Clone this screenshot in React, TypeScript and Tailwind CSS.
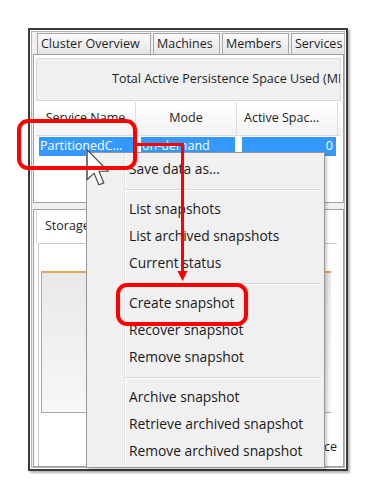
import React from 'react'

// Annotated screenshot: persistence console with a context menu on a service row

const FONT = { fontFamily: '"Open Sans", "Noto Sans", sans-serif' }

type MenuEntry = { label: string } | { sep: true }

const MENU: MenuEntry[] = [
    { label: 'Save data as...' },
    { sep: true },
    { label: 'List snapshots' },
    { label: 'List archived snapshots' },
    { label: 'Current status' },
    { sep: true },
    { label: 'Create snapshot' },
    { label: 'Recover snapshot' },
    { label: 'Remove snapshot' },
    { sep: true },
    { label: 'Archive snapshot' },
    { label: 'Retrieve archived snapshot' },
    { label: 'Remove archived snapshot' },
]

const Tab = ({ label, w }: { label: string; w: string }) => (
    <div
        className={`${w} h-[21px] shrink-0 flex items-center px-[3px] border border-[#a6a6a6] border-b-0 bg-gradient-to-b from-[#fbfbfb] to-[#e4e4e4] text-[12.5px] text-[#1e1e1e] whitespace-nowrap overflow-hidden`}
    >
        {label}
    </div>
)

const ContextMenu = () => (
    <div className="absolute left-[86px] top-[152px] w-[239px] h-[316px] border border-[#979797] bg-[#f0f0f0] shadow-[2px_2px_3px_rgba(0,0,0,0.2)] flex">
        <div className="w-[37px] shrink-0" />
        <div className="flex-1 border-l border-[#e2e3e3] shadow-[inset_1px_0_0_#ffffff] pt-[3px]">
            {MENU.map((item, i) =>
                'sep' in item ? (
                    <div key={i} className="h-[13px] flex items-center pr-[4px]">
                        <div className="w-full h-px bg-[#d7d7d7] shadow-[0_1px_0_#ffffff]" />
                    </div>
                ) : (
                    <div key={i} className="h-[27px] flex items-center pl-[4px] text-[13.8px] text-[#1a1a1a] whitespace-nowrap">
                        {item.label}
                    </div>
                ),
            )}
        </div>
    </div>
)

const Cursor = () => (
    <svg className="absolute left-[86px] top-[149px]" width="24" height="38" viewBox="0 0 13 21">
        <path
            d="M0.5 0.5 L0.5 17 L4.3 13.3 L7 19.8 L9.7 18.7 L7 12.3 L12.2 12.3 Z"
            fill="#ffffff"
            stroke="#4a4a4a"
            strokeWidth="0.65"
            strokeLinejoin="round"
        />
    </svg>
)

const Annotations = () => (
    <svg className="absolute left-0 top-0 pointer-events-none" width="370" height="488" viewBox="0 0 370 488">
        <rect x="19" y="121" width="116" height="47" rx="9" fill="none" stroke="#ff0000" strokeWidth="4" />
        <polyline points="137,144.5 182.5,144.5 182.5,272" fill="none" stroke="#ff0000" strokeWidth="3" />
        <polygon points="177.5,271 187.5,271 182.5,281" fill="#ff0000" />
        <rect x="118" y="285" width="128" height="39" rx="9" fill="none" stroke="#ff0000" strokeWidth="4" />
    </svg>
)

export default function App() {
    return (
        <div className="relative w-[370px] h-[488px] bg-white overflow-hidden" style={FONT}>
            {/* window frame */}
            <div className="ml-[28px] mt-[28px] w-[320px] h-[443px] border-2 border-[#3b3b3b] p-px bg-white shadow-[2px_2px_2px_rgba(0,0,0,0.3)]">
                <div className="h-full border border-[#b4b4b4] bg-[#f0f0f0] pl-px pt-px flex flex-col">
                    {/* tabs */}
                    <div className="h-[21px] flex gap-[2px] pl-[4px] overflow-hidden">
                        <Tab label="Cluster Overview" w="w-[114px]" />
                        <Tab label="Machines" w="w-[67px]" />
                        <Tab label="Members" w="w-[67px]" />
                        <Tab label="Services" w="w-[70px]" />
                    </div>

                    {/* persistence panel */}
                    <div className="h-[149px] shrink-0 border border-[#a0a0a0] bg-white pt-[3px] px-[2px] flex flex-col">
                        <div className="h-[43px] border border-[#dadada] bg-[#f0f0f0] flex items-center pl-[75px] text-[12.5px] text-[#1e1e1e] whitespace-nowrap overflow-hidden">
                            Total Active Persistence Space Used (MB)
                        </div>
                        <div className="mt-px h-[34px] flex border-b border-[#dedede] bg-gradient-to-b from-white to-[#f3f3f3] text-[12.5px] text-[#1e1e1e]">
                            <div className="w-[100px] flex items-center justify-center border-r border-[#dedede]">Service Name</div>
                            <div className="w-[101px] flex items-center justify-center border-r border-[#dedede]">Mode</div>
                            <div className="w-[101px] flex items-center pl-[7px] border-r border-[#dedede]">Active Spac...</div>
                        </div>
                        <div className="h-[21px] flex text-[12.5px] text-white">
                            <div className="w-[100px] pl-[3px] pr-[3px] py-px">
                                <div className="h-full bg-[#3399ff] flex items-center pl-px whitespace-nowrap overflow-hidden">PartitionedC...</div>
                            </div>
                            <div className="w-[101px] pl-[5px] pr-[2px] py-px">
                                <div className="h-full bg-[#3399ff] flex items-center pl-px">on-demand</div>
                            </div>
                            <div className="w-[101px] pl-[5px] pr-[2px] py-px">
                                <div className="h-full bg-[#3399ff] flex items-center justify-end pr-[3px]">0</div>
                            </div>
                        </div>
                    </div>

                    <div className="h-[6px] shrink-0" />

                    {/* storage panel */}
                    <div className="flex-1 border border-[#a0a0a0] bg-white flex flex-col pl-[2px]">
                        <div className="h-[33px] flex items-center pl-[8px] text-[12.5px] text-[#1e1e1e] border-l border-[#d8d8d8]">
                            Storage
                        </div>
                        <div className="flex-1 ml-[2px] mr-[6px] border-t border-l border-[#c8c8c8] pt-[27px] flex flex-col">
                            <div className="h-[142px] ml-[2px] mr-[6px] border-t-2 border-[#f3a150] border-l border-b border-l-[#a8a8a8] border-b-[#a8a8a8] bg-gradient-to-b from-[#e9e9e9] to-[#f7f7f7]" />
                            <div className="flex-1 flex items-end justify-end pb-[9px] text-[12.5px] text-[#1e1e1e]">
                                Space
                            </div>
                        </div>
                    </div>
                </div>
            </div>

            <ContextMenu />
            <Cursor />
            <Annotations />
        </div>
    )
}
